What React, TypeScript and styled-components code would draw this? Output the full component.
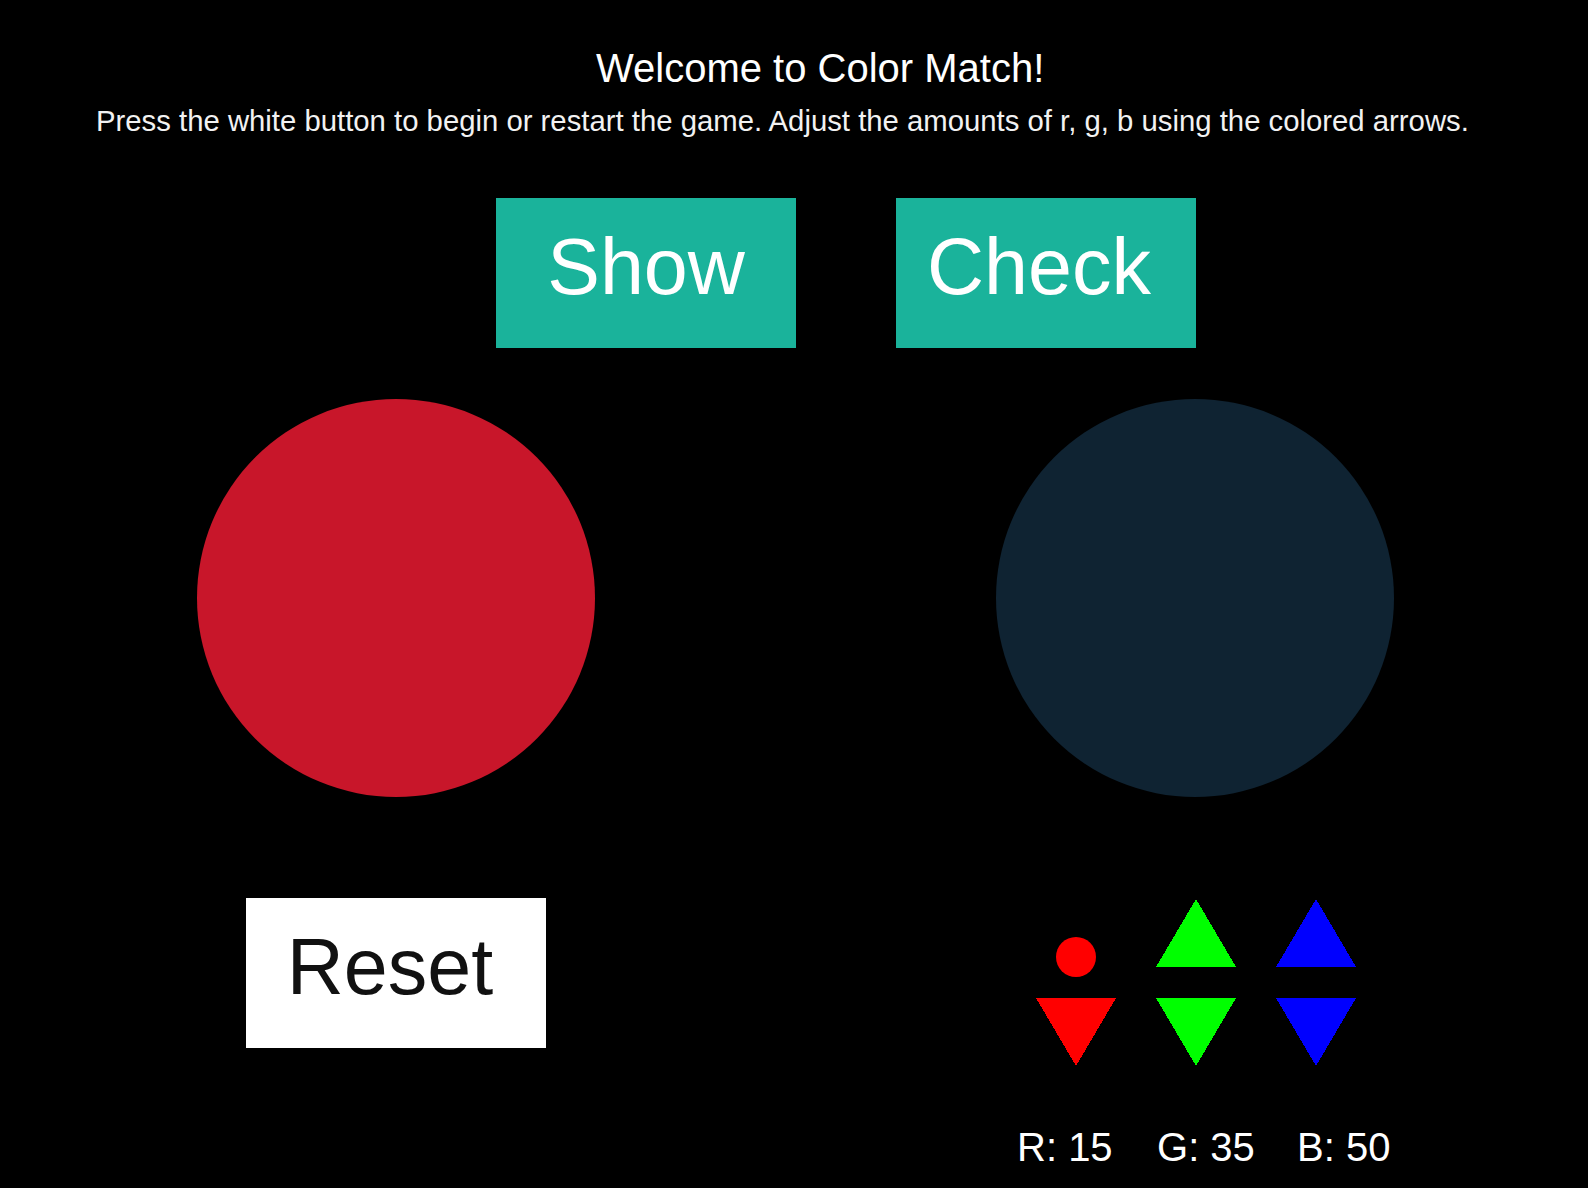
import React from "react";
import styled, { createGlobalStyle } from "styled-components";

interface Channel {
  key: string;
  label: string;
  value: number;
  color: string;
  hasUp: boolean;
}

const channels: Channel[] = [
  { key: "r", label: "R", value: 15, color: "#ff0000", hasUp: false },
  { key: "g", label: "G", value: 35, color: "#00ff00", hasUp: true },
  { key: "b", label: "B", value: 50, color: "#0000ff", hasUp: true },
];

const targetColor = "rgb(200, 22, 42)";

const Triangle: React.FC<{ color: string; dir: "up" | "down" }> = ({ color, dir }) => (
  <svg width="80" height="68" viewBox="0 0 80 68" shapeRendering="crispEdges">
    <polygon
      points={dir === "up" ? "40,0 80,68 0,68" : "0,0 80,0 40,68"}
      fill={color}
    />
  </svg>
);

const App: React.FC = () => {
  const guess = channels.map((c) => c.value);
  const guessColor = `rgb(${guess[0]}, ${guess[1]}, ${guess[2]})`;

  return (
    <>
      <GlobalStyle />
      <Page>
        <Title>Welcome to Color Match!</Title>
        <Subtitle>
          Press the white button to begin or restart the game. Adjust the amounts of r, g, b using
          the colored arrows.
        </Subtitle>

        <ButtonRow>
          <ActionButton $shift={0}>Show</ActionButton>
          <ActionButton $shift={-14}>Check</ActionButton>
        </ButtonRow>

        <Board>
          <Swatch $color={targetColor} />
          <Swatch $color={guessColor} />

          <ResetButton $shift={-12}>Reset</ResetButton>

          <Controls>
            <ArrowGrid>
              {channels.map((c) => (
                <ArrowColumn key={c.key}>
                  <ArrowCell $end={!c.hasUp}>
                    {c.hasUp ? <Triangle color={c.color} dir="up" /> : <Dot $color={c.color} />}
                  </ArrowCell>
                  <Triangle color={c.color} dir="down" />
                </ArrowColumn>
              ))}
            </ArrowGrid>
            <Readout>
              {channels.map((c) => (
                <ReadoutItem key={c.key}>
                  {c.label}: {c.value}
                </ReadoutItem>
              ))}
            </Readout>
          </Controls>
        </Board>
      </Page>
    </>
  );
};

export default App;

const GlobalStyle = createGlobalStyle`
  html, body {
    margin: 0;
    padding: 0;
    background: #000;
  }
  body {
    font-family: "Liberation Sans", Arial, sans-serif;
    color: #fff;
  }
  * {
    box-sizing: border-box;
  }
`;

const Page = styled.main`
  min-height: 1188px;
  width: 1588px;
  padding-top: 44px;
  background: #000;
  overflow: hidden;
`;

const Title = styled.h1`
  margin: 0;
  padding-left: 596px;
  font-size: 40px;
  line-height: 48px;
  font-weight: normal;
  color: #fff;
  white-space: nowrap;
`;

const Subtitle = styled.p`
  margin: 11px 0 0;
  padding-left: 96px;
  font-size: 29.3px;
  line-height: 36px;
  color: #f2f2f2;
  white-space: nowrap;
`;

const ButtonRow = styled.div`
  display: flex;
  gap: 100px;
  margin-top: 59px;
  padding-left: 496px;
`;

const BaseButton = styled.button<{ $shift: number }>`
  display: flex;
  align-items: center;
  justify-content: center;
  width: 300px;
  height: 150px;
  padding: 0 ${(p) => (p.$shift < 0 ? -p.$shift : 0)}px 14px 0;
  border: none;
  border-radius: 0;
  font-family: "Liberation Sans", Arial, sans-serif;
  font-size: 79px;
  line-height: 79px;
  cursor: pointer;
`;

const ActionButton = styled(BaseButton)`
  background: rgb(26, 179, 155);
  color: #fff;
`;

const ResetButton = styled(BaseButton)`
  justify-self: center;
  margin-left: 1px;
  background: #fff;
  color: #111;
`;

const Board = styled.section`
  display: grid;
  grid-template-columns: 793px 806px;
  row-gap: 101px;
  margin-top: 51px;
  margin-left: -1px;
`;

const Swatch = styled.div<{ $color: string }>`
  justify-self: center;
  width: 398px;
  height: 398px;
  border-radius: 50%;
  background: ${(p) => p.$color};
`;

const Controls = styled.div`
  display: flex;
  flex-direction: column;
  padding-left: 224px;
  padding-top: 1px;
`;

const ArrowGrid = styled.div`
  display: grid;
  grid-template-columns: repeat(3, 120px);
`;

const ArrowColumn = styled.div`
  display: flex;
  flex-direction: column;
  align-items: center;
  gap: 21px;

  > svg {
    display: block;
  }
`;

const ArrowCell = styled.div<{ $end: boolean }>`
  display: flex;
  align-items: ${(p) => (p.$end ? "flex-end" : "flex-start")};
  justify-content: center;
  height: 78px;

  > svg {
    display: block;
  }
`;

const Dot = styled.span<{ $color: string }>`
  width: 40px;
  height: 40px;
  border-radius: 50%;
  background: ${(p) => p.$color};
`;

const Readout = styled.div`
  display: flex;
  margin-top: 57px;
  padding-left: 1px;
`;

const ReadoutItem = styled.span`
  width: 140px;
  font-size: 40px;
  line-height: 48px;
  color: #fff;
  white-space: nowrap;
`;
